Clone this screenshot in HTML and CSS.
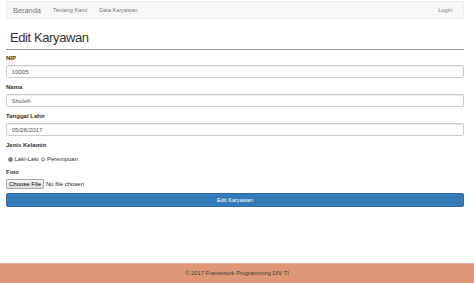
FILE: index.html
```html
<!DOCTYPE html>
<html>

<head>
  <meta charset="UTF-8">
  <title>Edit Karyawan</title>
  <link rel="stylesheet" href="styles.css">
</head>

<body>
  <div class="page">
    <div class="container">

      <nav class="navbar">
        <div class="nav-left">
          <a class="brand" href="#">Beranda</a>
          <a class="nav-link" href="#">Tentang Kami</a>
          <a class="nav-link" href="#">Data Karyawan</a>
        </div>
        <div class="nav-right">
          <a class="nav-link" href="#">Login</a>
        </div>
      </nav>

      <h1>Edit Karyawan</h1>
      <hr />

      <form>
        <div class="form-group">
          <label>NIP</label>
          <input class="form-control" type="text" value="10005">
        </div>
        <div class="form-group">
          <label>Nama</label>
          <input class="form-control" type="text" value="Sholeh">
        </div>
        <div class="form-group">
          <label>Tanggal Lahir</label>
          <input class="form-control" type="text" value="05/28/2017">
        </div>
        <div class="form-group">
          <label>Jenis Kelamin</label>
          <div class="radios">
            <label class="radio-inline"><input type="radio" name="jk" checked> Laki-Laki</label>
            <label class="radio-inline"><input type="radio" name="jk"> Perempuan</label>
          </div>
        </div>
        <div class="form-group foto">
          <label>Foto</label>
          <div class="file-row">
            <span class="file-btn">Choose File</span>
            <span class="file-name">No file chosen</span>
          </div>
        </div>
        <button class="btn-primary" type="button">Edit Karyawan</button>
      </form>

    </div>

    <footer class="footer">
      &copy; 2017 Framework Programming DIV TI
    </footer>
  </div>
</body>

</html>
```

FILE: styles.css
```css
body,
html {
  padding: 0;
  margin: 0;
}

body {
  font-family: "Liberation Sans", Arial, sans-serif;
  font-size: 5.6px;
  color: #333;
  background: #fff;
}

a {
  text-decoration: none;
}

.page {
  display: flex;
  flex-direction: column;
  min-height: 100vh;
}

.container {
  padding: 1px 10px 0 6px;
}

.navbar {
  display: flex;
  justify-content: space-between;
  align-items: center;
  height: 16px;
  background: #f8f8f8;
  border: 1px solid #ececec;
  border-radius: 2px;
  padding-right: 5px;
}

.nav-left,
.nav-right {
  display: flex;
  align-items: center;
}

.brand {
  font-size: 7.4px;
  color: #777;
  padding: 0 6px;
}

.nav-link {
  font-size: 5.6px;
  color: #777;
  padding: 0 6px;
}

h1 {
  font-size: 13px;
  font-weight: normal;
  letter-spacing: -0.4px;
  line-height: 15.4px;
  margin: 11px 0 0 4px;
  color: #333;
}

hr {
  border: none;
  border-top: 1px solid #999;
  margin: 4px 0 4px 0;
}

.form-group {
  margin-bottom: 5px;
}

.form-group.foto {
  margin-bottom: 4.5px;
}

.form-group > label {
  display: block;
  font-weight: bold;
  font-size: 6px;
  line-height: 8px;
  margin-bottom: 2.5px;
}

.form-control {
  display: block;
  box-sizing: border-box;
  width: 100%;
  height: 13.5px;
  padding: 0 4.5px;
  font-family: inherit;
  font-size: 6.2px;
  color: #555;
  background: #fff;
  border: 1px solid #ccc;
  border-radius: 1.6px;
  box-shadow: inset 0 1px 1px rgba(0, 0, 0, .075);
  outline: none;
}

.radios {
  display: flex;
  align-items: center;
  height: 8px;
  margin-top: 6px;
  padding-left: 1px;
}

.radio-inline {
  display: flex;
  align-items: center;
  font-size: 6px;
  color: #333;
  margin-right: 1px;
}

.radio-inline input {
  width: 4.5px;
  height: 4.5px;
  margin: 0 2px 0 1px;
  accent-color: #777;
}

.file-row {
  display: flex;
  align-items: center;
  height: 10px;
}

.file-btn {
  display: inline-flex;
  align-items: center;
  box-sizing: border-box;
  height: 10px;
  padding: 0 2px;
  font-size: 6px;
  color: #000;
  background: linear-gradient(#f6f6f6, #dedede);
  border: 1px solid #a9a9a9;
  border-radius: 1px;
}

.file-name {
  font-size: 6px;
  color: #222;
  margin-left: 2px;
}

.btn-primary {
  display: block;
  width: 100%;
  height: 13.5px;
  padding: 0;
  font-family: inherit;
  font-size: 5.6px;
  color: #fff;
  background: #337ab7;
  border: 1px solid #2e6da4;
  border-radius: 1.6px;
}

.footer {
  margin-top: auto;
  height: 19px;
  line-height: 19px;
  background: #df9877;
  border-top: 1px solid #e8b8a0;
  text-align: center;
  font-size: 5.8px;
  color: #3a3a3a;
}
```
